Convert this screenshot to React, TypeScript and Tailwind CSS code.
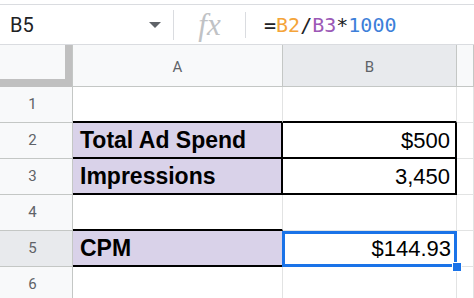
import React from 'react';

const GRID = 'grid grid-cols-[73px_210px_174px_1fr]';

const RowHead: React.FC<{ n: number; active?: boolean }> = ({ n, active }) => (
  <div
    className={`flex items-center justify-center border-r border-b border-[#c4c7c5] pr-[7px] font-['Roboto','Liberation_Sans',sans-serif] text-[15px] text-[#5f6368] ${
      active ? 'bg-[#e8eaed]' : 'bg-[#f8f9fa]'
    }`}
  >
    {n}
  </div>
);

const Cell: React.FC<{ className?: string; children?: React.ReactNode }> = ({ className = '', children }) => (
  <div
    className={`flex items-center overflow-hidden whitespace-nowrap border-r border-b border-[#e2e3e3] font-['Liberation_Sans',Arial,sans-serif] text-[22px] text-black ${className}`}
  >
    {children}
  </div>
);

const App: React.FC = () => {
  return (
    <div className="h-[298px] w-[474px] overflow-hidden bg-white">
      {/* Formula bar */}
      <div className="h-[4px] bg-white" />
      <div className="flex h-[41px] items-center border-t border-b border-[#dadce0] bg-white">
        <div className="flex w-[173px] items-center pl-[10px] pr-[12px]">
          <span className="font-['Roboto','Liberation_Sans',sans-serif] text-[20px] text-[#202124]">B5</span>
          <svg className="ml-auto" width="12" height="6" viewBox="0 0 12 6">
            <path d="M0 0 L12 0 L6 6 Z" fill="#5f6368" />
          </svg>
        </div>
        <div className="h-[30px] w-px bg-[#dadce0]" />
        <div className="flex w-[71px] justify-center">
          <span className="font-['Liberation_Serif',serif] text-[31px] italic leading-none text-[#c0c2c5]">fx</span>
        </div>
        <div className="h-[26px] w-px bg-[#dadce0]" />
        <div className="pl-[18px] font-['DejaVu_Sans_Mono',monospace] text-[20px] text-[#202124]">
          =<span className="text-[#f4a43a]">B2</span>/<span className="text-[#9c59b6]">B3</span>*
          <span className="text-[#3d7fd9]">1000</span>
        </div>
      </div>

      {/* Column headers */}
      <div className={`${GRID} h-[42px]`}>
        <div className="border-r border-[#c4c7c5]">
          <div className="h-full border-r-[7px] border-b-[8px] border-[#c0c0c0] bg-[#f8f9fa]" />
        </div>
        {['A', 'B', ''].map((c, i) => (
          <div
            key={i}
            className={`flex items-center justify-center border-r border-b border-[#c4c7c5] pt-[3px] font-['Roboto','Liberation_Sans',sans-serif] text-[15px] text-[#5f6368] ${
              c === 'B' ? 'bg-[#e8eaed]' : 'bg-[#f8f9fa]'
            }`}
          >
            {c}
          </div>
        ))}
      </div>

      {/* Row 1 */}
      <div className={`${GRID} h-[36px]`}>
        <RowHead n={1} />
        <Cell className="border-b-2 border-b-black" />
        <Cell className="border-b-2 border-b-black" />
        <Cell />
      </div>

      {/* Row 2 */}
      <div className={`${GRID} h-[36px]`}>
        <RowHead n={2} />
        <Cell className="border-r-2 border-r-black border-b-2 border-b-black bg-[#d9d2e9] pl-[7px] text-[23px] font-bold">
          Total Ad Spend
        </Cell>
        <Cell className="justify-end border-r-2 border-r-black border-b-2 border-b-black pr-[5px]">$500</Cell>
        <Cell />
      </div>

      {/* Row 3 */}
      <div className={`${GRID} h-[36px]`}>
        <RowHead n={3} />
        <Cell className="border-r-2 border-r-black border-b-2 border-b-black bg-[#d9d2e9] pl-[7px] text-[23px] font-bold">
          Impressions
        </Cell>
        <Cell className="justify-end border-r-2 border-r-black border-b-2 border-b-black pr-[5px]">3,450</Cell>
        <Cell />
      </div>

      {/* Row 4 */}
      <div className={`${GRID} h-[36px]`}>
        <RowHead n={4} />
        <Cell className="border-b-2 border-b-black" />
        <Cell />
        <Cell />
      </div>

      {/* Row 5 */}
      <div className={`${GRID} h-[36px]`}>
        <RowHead n={5} active />
        <Cell className="border-b-2 border-b-black bg-[#d9d2e9] pl-[7px] text-[23px] font-bold">CPM</Cell>
        <Cell className="relative justify-end overflow-visible pr-[5px]">
          $144.93
          {/* selection */}
          <div className="pointer-events-none absolute top-0 right-[-1px] bottom-[-1px] left-[-1px] border-[3px] border-[#1a73e8]" />
          <div className="absolute right-[-6px] bottom-[-6px] h-[10px] w-[10px] border border-white bg-[#1a73e8]" />
        </Cell>
        <Cell />
      </div>

      {/* Row 6 */}
      <div className={`${GRID} h-[36px]`}>
        <RowHead n={6} />
        <Cell />
        <Cell />
        <Cell />
      </div>
    </div>
  );
};

export default App;
